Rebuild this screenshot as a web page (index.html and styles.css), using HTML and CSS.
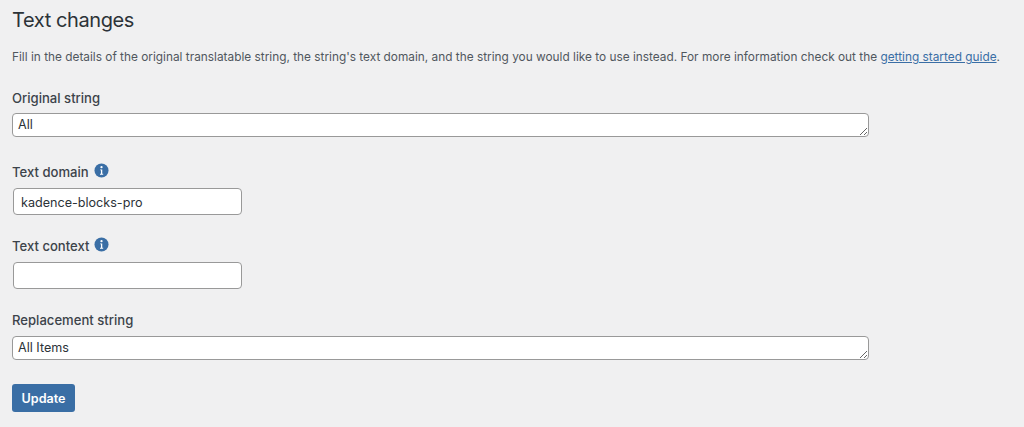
FILE: index.html
```html
<!DOCTYPE html>
<html lang="en">
<head>
    <meta charset="UTF-8">
    <meta name="viewport" content="width=device-width, initial-scale=1.0">
    <title>Text changes</title>
    <link rel="stylesheet" href="styles.css">
</head>
<body>
    <div class="wrap">
        <h1>Text changes</h1>
        <p class="intro">Fill in the details of the original translatable string, the string's text domain, and the string you would like to use instead. For more information check out the <a href="#">getting started guide</a>.</p>
        <form class="fields">
            <div class="field">
                <label for="original">Original string</label>
                <textarea id="original" rows="1">All</textarea>
            </div>
            <div class="field">
                <label for="domain">Text domain
                    <svg class="info" viewBox="0 0 16 16"><circle cx="8" cy="8" r="7.5" fill="#3a6ea5"/><circle cx="8" cy="4.4" r="1.2" fill="#fff"/><path d="M6.6 6.8h2.2v4.7h1v1H6.4v-1h1v-3.7h-.8z" fill="#fff"/></svg>
                </label>
                <input type="text" id="domain" value="kadence-blocks-pro">
            </div>
            <div class="field">
                <label for="context">Text context
                    <svg class="info" viewBox="0 0 16 16"><circle cx="8" cy="8" r="7.5" fill="#3a6ea5"/><circle cx="8" cy="4.4" r="1.2" fill="#fff"/><path d="M6.6 6.8h2.2v4.7h1v1H6.4v-1h1v-3.7h-.8z" fill="#fff"/></svg>
                </label>
                <input type="text" id="context">
            </div>
            <div class="field">
                <label for="replacement">Replacement string</label>
                <textarea id="replacement" rows="1">All Items</textarea>
            </div>
            <button type="submit">Update</button>
        </form>
    </div>
</body>
</html>
```

FILE: styles.css
```css
body {
    font-family: Inter, "Liberation Sans", sans-serif;
    background: #f0f0f1;
    color: #3c434a;
    margin: 0;
    overflow: hidden;
}
.wrap {
    padding: 8px 12px 0;
}
h1 {
    font-size: 20px;
    font-weight: 400;
    letter-spacing: -0.4px;
    line-height: 24px;
    color: #2c3338;
    margin: 0;
}
.intro {
    font-size: 11.85px;
    line-height: 18px;
    margin: 16px 0 0;
    color: #50575e;
    white-space: nowrap;
}
.intro a {
    color: #3a6ea5;
}
.fields {
    margin-top: 23px;
}
.field {
    margin-bottom: 22px;
}
.field:first-child {
    margin-bottom: 26px;
}
.field:nth-child(4) {
    margin-bottom: 24px;
}
label {
    display: flex;
    align-items: center;
    gap: 5px;
    font-size: 13.1px;
    font-weight: 500;
    line-height: 18px;
    margin-bottom: 7px;
}
.field:first-child label {
    margin-bottom: 6px;
}
.info {
    width: 15px;
    height: 15px;
    margin-top: -3px;
}
textarea, input[type="text"] {
    display: block;
    box-sizing: border-box;
    font-family: inherit;
    font-size: 12.6px;
    color: #2c3338;
    background: #fff;
    border: 1px solid #999;
    border-radius: 4px;
    margin: 0;
}
textarea {
    width: 857px;
    height: 24px;
    padding: 3px 5px;
    line-height: 16px;
}
input[type="text"] {
    width: 229px;
    height: 27px;
    margin-left: 1px;
    padding: 1px 7px 0;
}
button {
    background: #3a6ea5;
    color: #fff;
    font-family: inherit;
    font-size: 12.6px;
    font-weight: 600;
    width: 63px;
    height: 28px;
    padding: 0;
    border: none;
    border-radius: 3px;
    cursor: pointer;
}
```
